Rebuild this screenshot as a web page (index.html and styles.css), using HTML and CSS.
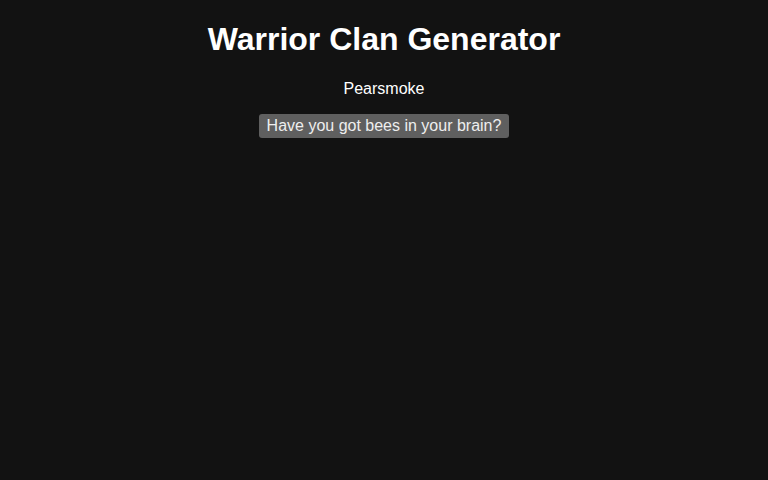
FILE: index.html
```html
<!DOCTYPE html>
<html lang="en">
<head>
  <meta charset="UTF-8">
  <meta name="viewport" content="width=device-width, initial-scale=1.0">
  <title>Warrior Clan Generator</title>
  <link rel="stylesheet" href="styles.css">
</head>
<body>

<div id="generator">
  <h1>Warrior Clan Generator</h1>
  <p id="catName">Pearsmoke</p>
  <button>Have you got bees in your brain?</button>
</div>

</body>
</html>
```

FILE: styles.css
```css
body {
  font-family: 'Liberation Sans', Arial, sans-serif;
  background-color: #121212;
  color: #fff;
  margin: 0;
}

#generator {
  text-align: center;
}

h1 {
  font-size: 32px;
  margin: 21.44px 0;
}

p {
  font-size: 16px;
  margin: 16px 0;
}

button {
  font-family: 'Liberation Sans', Arial, sans-serif;
  font-size: 16px;
  line-height: 18px;
  background-color: #5f5f5f;
  color: #eee;
  border: none;
  border-radius: 3px;
  padding: 3px 8px;
  cursor: pointer;
}
```
